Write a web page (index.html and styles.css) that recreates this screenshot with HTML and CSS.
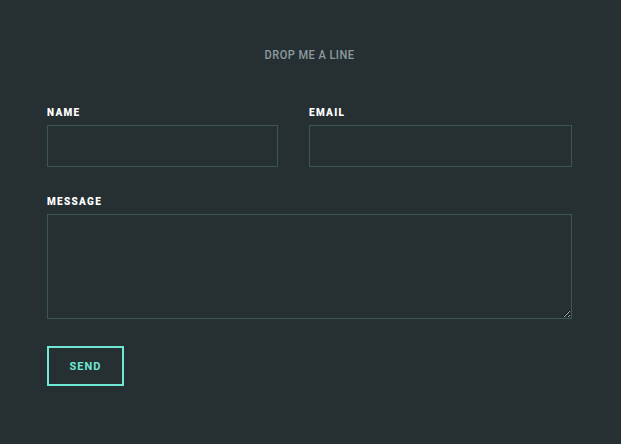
FILE: index.html
```html
<!DOCTYPE html>
<html>
<head>
<meta charset="utf-8">
<link rel="stylesheet" href="styles.css">
</head>
<body>
<main class="contact">
  <h2 class="title">DROP ME A LINE</h2>
  <form class="form">
    <div class="row">
      <div class="field">
        <label class="label">NAME</label>
        <input class="input" type="text">
      </div>
      <div class="field">
        <label class="label">EMAIL</label>
        <input class="input" type="text">
      </div>
    </div>
    <div class="field">
      <label class="label">MESSAGE</label>
      <textarea class="textarea"></textarea>
    </div>
    <button class="send" type="button">SEND</button>
  </form>
</main>
</body>
</html>
```
FILE: styles.css
```css
html, body {
  margin: 0;
  padding: 0;
  background: #263033;
  height: 100%;
}
.contact {
  padding: 47px 49px 0 47px;
  font-family: Roboto, "Liberation Sans", sans-serif;
}
.title {
  margin: 0 0 44px 0;
  text-align: center;
  font-size: 12px;
  font-weight: 500;
  color: #8c9a9d;
  letter-spacing: 0.5px;
  transform: scaleX(0.92);
  line-height: 16px;
}
.form {
  display: flex;
  flex-direction: column;
}
.row {
  display: grid;
  grid-template-columns: 231px 263px;
  column-gap: 31px;
  margin-bottom: 29px;
}
.field {
  display: flex;
  flex-direction: column;
}
.label {
  font-size: 10px;
  font-weight: 900;
  color: #ffffff;
  letter-spacing: 1.3px;
  line-height: 12px;
  margin-bottom: 6px;
}
.input {
  box-sizing: border-box;
  height: 42px;
  background: transparent;
  border: 1px solid #3b5754;
  margin: 0;
  padding: 0;
  outline: none;
}
.textarea {
  box-sizing: border-box;
  height: 105px;
  background: transparent;
  border: 1px solid #3b5754;
  margin: 0;
  padding: 0;
  outline: none;
}
.send {
  margin-top: 27px;
  align-self: flex-start;
  box-sizing: border-box;
  width: 77px;
  height: 40px;
  background: transparent;
  border: 2px solid #6fe8d5;
  color: #6fe8d5;
  font-family: Roboto, "Liberation Sans", sans-serif;
  font-weight: 700;
  font-size: 11px;
  letter-spacing: 1px;
  padding: 0;
}
```
